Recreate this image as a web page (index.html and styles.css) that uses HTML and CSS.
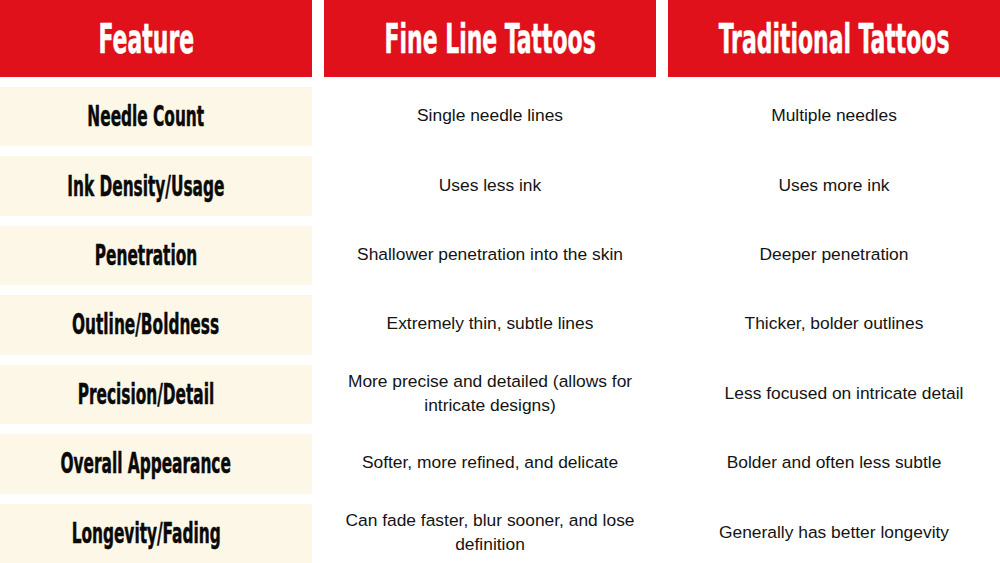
FILE: index.html
```html
<!DOCTYPE html>
<html lang="en">
<head>
<meta charset="utf-8">
<title>Fine Line vs Traditional Tattoos</title>
<link rel="stylesheet" href="styles.css">
</head>
<body>
<div class="table">
  <div class="head first"><span class="cond">Feature</span></div>
  <div class="head"><span class="cond">Fine Line Tattoos</span></div>
  <div class="head"><span class="cond">Traditional Tattoos</span></div>

  <div class="label"><span class="cond">Needle Count</span></div>
  <div class="cell">Single needle lines</div>
  <div class="cell">Multiple needles</div>

  <div class="label"><span class="cond">Ink Density/Usage</span></div>
  <div class="cell">Uses less ink</div>
  <div class="cell">Uses more ink</div>

  <div class="label"><span class="cond">Penetration</span></div>
  <div class="cell">Shallower penetration into the skin</div>
  <div class="cell">Deeper penetration</div>

  <div class="label"><span class="cond">Outline/Boldness</span></div>
  <div class="cell">Extremely thin, subtle lines</div>
  <div class="cell">Thicker, bolder outlines</div>

  <div class="label"><span class="cond">Precision/Detail</span></div>
  <div class="cell">More precise and detailed (allows for intricate designs)</div>
  <div class="cell shift">Less focused on intricate detail</div>

  <div class="label"><span class="cond">Overall Appearance</span></div>
  <div class="cell">Softer, more refined, and delicate</div>
  <div class="cell">Bolder and often less subtle</div>

  <div class="label"><span class="cond">Longevity/Fading</span></div>
  <div class="cell">Can fade faster, blur sooner, and lose definition</div>
  <div class="cell">Generally has better longevity</div>
</div>
</body>
</html>
```
FILE: styles.css
```css
html, body {
  margin: 0;
  padding: 0;
  background: #ffffff;
}

.table {
  display: grid;
  grid-template-columns: 312px 332px 332px;
  grid-template-rows: 77px repeat(7, 1fr);
  column-gap: 12px;
  row-gap: 10px;
  width: 1000px;
  height: 563px;
}

.head,
.label,
.cell {
  display: flex;
  align-items: center;
  justify-content: center;
  text-align: center;
}

.head {
  background: #e0111b;
  color: #ffffff;
  font-family: "DejaVu Sans Condensed", "DejaVu Sans", sans-serif;
  font-weight: 700;
  font-size: 40px;
}

.head.first,
.label {
  padding-right: 20px;
}

.label {
  background: #fdf7e7;
  color: #0a0a0a;
  font-family: "DejaVu Sans Condensed", "DejaVu Sans", sans-serif;
  font-weight: 700;
  font-size: 28px;
}

.cond {
  display: inline-block;
  transform: scaleX(0.61);
  white-space: nowrap;
  -webkit-text-stroke: 0.5px currentColor;
}

.cell {
  background: #ffffff;
  color: #141414;
  font-family: "Liberation Sans", Arial, sans-serif;
  font-size: 17.4px;
  line-height: 24px;
  padding: 0 16px 3px;
}

.cell.shift {
  padding-left: 36px;
  padding-right: 16px;
}
```
